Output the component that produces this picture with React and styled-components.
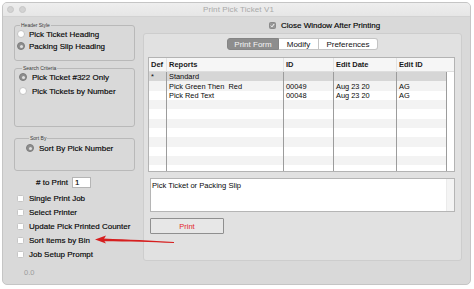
import React from "react";
import styled, { createGlobalStyle, css } from "styled-components";

const GlobalStyle = createGlobalStyle`
  html, body { margin: 0; padding: 0; background: #ffffff; }
  body { font-family: "Liberation Sans", Arial, sans-serif; color: #111111; }
  * { box-sizing: border-box; }
`;

const Page = styled.div`
  position: relative;
  width: 474px;
  height: 289px;
  padding: 2px 0 0 2px;
`;

const Window = styled.div`
  width: 469px;
  height: 283px;
  background: #d9d9d9;
  border: 1px solid #c5c5c5;
  border-radius: 5px;
  overflow: hidden;
  display: flex;
  flex-direction: column;
`;

const TitleBar = styled.div`
  height: 14px;
  flex: none;
  display: grid;
  grid-template-columns: 1fr auto 1fr;
  align-items: center;
  background: linear-gradient(#eeeeee, #e6e6e6);
  border-bottom: 1px solid #d2d2d2;
  padding-left: 4px;
`;

const Lights = styled.div`
  display: flex;
  gap: 5px;
`;

const Light = styled.span`
  width: 7px;
  height: 7px;
  border-radius: 50%;
  background: #d3d3d3;
  border: 1px solid #c7c7c7;
`;

const Title = styled.div`
  font-size: 8px;
  color: #a9a9a9;
  letter-spacing: 0.1px;
`;

const Body = styled.div`
  flex: 1;
  display: flex;
  gap: 8px;
  padding: 4px 8px 0 11px;
`;

const LeftColumn = styled.div`
  width: 121px;
  flex: none;
  display: flex;
  flex-direction: column;
  padding-top: 1px;
`;

const Group = styled.fieldset`
  margin: ${(p) => p.$top || 0}px 0 0 0;
  padding: ${(p) => p.$padTop || 0}px 0 0 ${(p) => p.$padLeft}px;
  height: ${(p) => p.$height}px;
  border: 1px solid #b9b9b9;
  border-radius: 3px;
  display: flex;
  flex-direction: column;
  gap: ${(p) => p.$gap || 0}px;
  min-width: 0;
`;

const Legend = styled.legend`
  font-size: 5px;
  line-height: 6px;
  color: #3a3a3a;
  padding: 0 1px;
  margin-left: 3px;
`;

const OptionRow = styled.label`
  display: flex;
  align-items: center;
  gap: ${(p) => p.$gap || 4}px;
  height: ${(p) => p.$height || 12}px;
  font-size: 8px;
  color: #050505;
  white-space: nowrap;
  -webkit-text-stroke: 0.15px #050505;
`;

const Radio = styled.span`
  width: 8px;
  height: 8px;
  flex: none;
  border-radius: 50%;
  border: 1px solid #c3c3c3;
  background: #ffffff;
  display: flex;
  align-items: center;
  justify-content: center;
  ${(p) =>
    p.$checked &&
    css`
      background: #8e8e8e;
      border-color: #7d7d7d;
      &::after {
        content: "";
        width: 3px;
        height: 3px;
        border-radius: 50%;
        background: #dedede;
      }
    `}
`;

const Box = styled.span`
  width: 7px;
  height: 7px;
  flex: none;
  border-radius: 1.5px;
  border: 1px solid #c6c6c6;
  background: #ffffff;
  display: flex;
  align-items: center;
  justify-content: center;
  ${(p) =>
    p.$checked &&
    css`
      background: #979797;
      border-color: #8a8a8a;
    `}
`;

const PrintCountRow = styled.div`
  margin-top: 6px;
  height: 11px;
  display: flex;
  align-items: center;
  gap: 4px;
  padding-left: 22px;
  font-size: 8px;
  color: #050505;
  -webkit-text-stroke: 0.15px #050505;
`;

const CountInput = styled.div`
  width: 19px;
  height: 11px;
  background: #ffffff;
  border: 1px solid #b5b5b5;
  font-size: 8px;
  line-height: 9px;
  padding-left: 2px;
`;

const CheckList = styled.div`
  margin-top: 3px;
  display: flex;
  flex-direction: column;
  padding-left: 3px;
`;

const Version = styled.div`
  margin-top: 5px;
  height: 12px;
  display: flex;
  align-items: center;
  padding-left: 10px;
  font-size: 7.5px;
  color: #9b9b9b;
`;

const RightColumn = styled.div`
  width: 319px;
  flex: none;
  display: flex;
  flex-direction: column;
`;

const CloseRow = styled(OptionRow)`
  height: 9px;
  padding-left: 126px;
  gap: 5px;
`;

const Panel = styled.div`
  margin-top: 3px;
  height: 228px;
  background: #e1e1e1;
  border: 1px solid #cdcdcd;
  border-radius: 3px;
  display: flex;
  flex-direction: column;
  padding: 4px 0 0 4px;
`;

const Tabs = styled.div`
  align-self: center;
  margin-left: -4px;
  display: flex;
  height: 12px;
`;

const Tab = styled.div`
  width: ${(p) => p.$w}px;
  height: 12px;
  display: flex;
  align-items: center;
  justify-content: center;
  font-size: 8px;
  border: 1px solid #bdbdbd;
  border-left-width: ${(p) => (p.$first ? 1 : 0)}px;
  background: ${(p) => (p.$active ? "#8d8d8d" : "#ffffff")};
  color: ${(p) => (p.$active ? "#f4f4f4" : "#111111")};
  border-color: ${(p) => (p.$active ? "#858585" : "#c4c4c4")};
  border-radius: ${(p) => (p.$first ? "3px 0 0 3px" : p.$last ? "0 3px 3px 0" : "0")};
`;

const cols = "18px 117px 50px 63px 50px 1fr";

const TableBox = styled.div`
  margin-top: 7px;
  width: 307px;
  height: 115px;
  border: 1px solid #b3b3b3;
  background: #ffffff;
  overflow: hidden;
  display: flex;
  flex-direction: column;
`;

const HeaderRow = styled.div`
  display: grid;
  grid-template-columns: ${cols};
  height: 14px;
  flex: none;
  background: #f6f6f6;
  border-bottom: 1px solid #dedede;
`;

const HeadCell = styled.div`
  display: flex;
  align-items: center;
  padding-left: 2px;
  font-size: 7.5px;
  font-weight: bold;
  color: #1a1a1a;
  border-right: 1px solid ${(p) => (p.$line ? "#e2e2e2" : "transparent")};
`;

const BodyRow = styled.div`
  display: grid;
  grid-template-columns: ${cols};
  height: 9.35px;
  flex: none;
  background: ${(p) => (p.$selected ? "#d6d6d6" : p.$odd ? "#f3f3f3" : "#ffffff")};
`;

const Cell = styled.div`
  display: flex;
  align-items: center;
  padding-left: 2px;
  font-size: 7.4px;
  color: #080808;
  white-space: pre;
  overflow: hidden;
  border-right: 1px solid ${(p) => (p.$line ? "#9c9c9c" : "transparent")};
`;

const ScrollCell = styled.div`
  background: #ffffff;
`;

const DescBox = styled.div`
  margin: 6px 0 0 2px;
  width: 305px;
  height: 34px;
  border: 1px solid #b5b5b5;
  background: #ffffff;
  display: grid;
  grid-template-columns: 1fr 8px;
`;

const DescText = styled.div`
  font-size: 7.6px;
  padding: 2px 0 0 1px;
  color: #080808;
`;

const DescScroll = styled.div`
  background: #f4f4f4;
  border-left: 1px solid #ebebeb;
`;

const PrintButton = styled.button`
  margin: 6px 0 0 2px;
  width: 74px;
  height: 16px;
  padding: 0;
  background: #e7e7e7;
  border: 1px solid #8f8f8f;
  border-radius: 1px;
  font-family: "Liberation Sans", Arial, sans-serif;
  font-size: 7.5px;
  color: #e2262c;
`;

const Annotation = styled.svg`
  position: absolute;
  left: 0;
  top: 0;
  pointer-events: none;
`;

const rows = [
  { def: "*", name: "Standard", id: "", date: "", by: "" },
  { def: "", name: "Pick Green Then  Red", id: "00049", date: "Aug 23 20", by: "AG" },
  { def: "", name: "Pick Red Text", id: "00048", date: "Aug 23 20", by: "AG" },
];
while (rows.length < 11) rows.push({ def: "", name: "", id: "", date: "", by: "" });

const checks = [
  "Single Print Job",
  "Select Printer",
  "Update Pick Printed Counter",
  "Sort Items by Bin",
  "Job Setup Prompt",
];

export default function App() {
  return (
    <Page>
      <GlobalStyle />
      <Window>
        <TitleBar>
          <Lights>
            <Light />
            <Light />
          </Lights>
          <Title>Print Pick Ticket V1</Title>
          <span />
        </TitleBar>
        <Body>
          <LeftColumn>
            <Group $height={39} $padLeft={2}>
              <Legend>Header Style</Legend>
              <OptionRow $gap={4}>
                <Radio />
                Pick Ticket Heading
              </OptionRow>
              <OptionRow $gap={4}>
                <Radio $checked />
                Packing Slip Heading
              </OptionRow>
            </Group>
            <Group $top={4} $height={62} $padLeft={4} $padTop={0} $gap={2}>
              <Legend>Search Criteria</Legend>
              <OptionRow $gap={5}>
                <Radio $checked />
                Pick Ticket #322 Only
              </OptionRow>
              <OptionRow $gap={5}>
                <Radio />
                Pick Tickets by Number
              </OptionRow>
            </Group>
            <Group $top={8} $height={36} $padLeft={11} $padTop={1}>
              <Legend>Sort By</Legend>
              <OptionRow $gap={5}>
                <Radio $checked />
                Sort By Pick Number
              </OptionRow>
            </Group>
            <PrintCountRow>
              # to Print
              <CountInput>1</CountInput>
            </PrintCountRow>
            <CheckList>
              {checks.map((c) => (
                <OptionRow key={c} $height={14} $gap={5}>
                  <Box />
                  {c}
                </OptionRow>
              ))}
            </CheckList>
            <Version>0.0</Version>
          </LeftColumn>
          <RightColumn>
            <CloseRow>
              <Box $checked>
                <svg width="5" height="5" viewBox="0 0 5 5">
                  <path d="M0.8 2.6 L2 3.8 L4.2 1" fill="none" stroke="#ffffff" strokeWidth="1" />
                </svg>
              </Box>
              Close Window After Printing
            </CloseRow>
            <Panel>
              <Tabs>
                <Tab $w={52} $first $active>Print Form</Tab>
                <Tab $w={40}>Modify</Tab>
                <Tab $w={59} $last>Preferences</Tab>
              </Tabs>
              <TableBox>
                <HeaderRow>
                  <HeadCell $line>Def</HeadCell>
                  <HeadCell $line>Reports</HeadCell>
                  <HeadCell $line>ID</HeadCell>
                  <HeadCell $line>Edit Date</HeadCell>
                  <HeadCell>Edit ID</HeadCell>
                  <span />
                </HeaderRow>
                {rows.map((r, i) => (
                  <BodyRow key={i} $selected={i === 0} $odd={i % 2 === 1}>
                    <Cell $line>{r.def}</Cell>
                    <Cell $line>{r.name}</Cell>
                    <Cell $line>{r.id}</Cell>
                    <Cell $line>{r.date}</Cell>
                    <Cell $line>{r.by}</Cell>
                    <ScrollCell />
                  </BodyRow>
                ))}
              </TableBox>
              <DescBox>
                <DescText>Pick Ticket or Packing Slip</DescText>
                <DescScroll />
              </DescBox>
              <PrintButton>Print</PrintButton>
            </Panel>
          </RightColumn>
        </Body>
      </Window>
      <Annotation width="474" height="289" viewBox="0 0 474 289">
        <path d="M103 238.6 C130 239.6 150 240.6 174 242 L174 242.9 C150 242 130 241.4 103 241.2 Z" fill="#d61f1f" />
        <path d="M95 239.6 L106 235.4 L103.5 239.8 L106 243.6 Z" fill="#d61f1f" />
      </Annotation>
    </Page>
  );
}
